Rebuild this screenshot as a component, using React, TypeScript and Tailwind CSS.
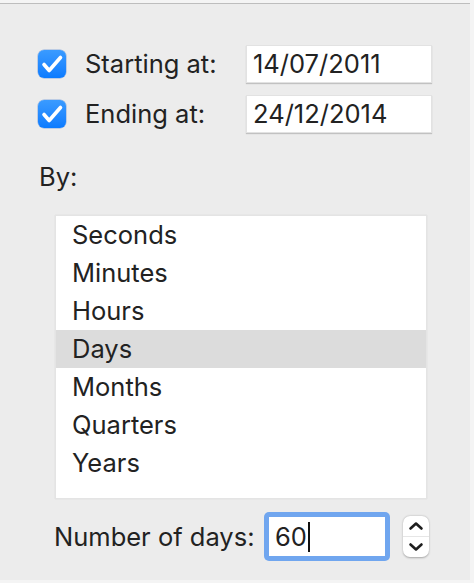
import React from "react"

const units = ["Seconds", "Minutes", "Hours", "Days", "Months", "Quarters", "Years"]

function CheckBox() {
    return (
        <div className="w-[28px] h-[28px] rounded-[6px] bg-gradient-to-b from-[#3a9bff] to-[#0a7bff] shadow-[0_0_0_0.5px_rgba(0,80,200,0.4)]">
            <svg width="28" height="28" viewBox="0 0 28 28" fill="none">
                <path d="M6 14.5 L11.2 20.5 L22.5 7.5" stroke="white" strokeWidth="3.6" strokeLinecap="round" strokeLinejoin="round" />
            </svg>
        </div>
    )
}

function DateRow({ label, value }: { label: string; value: string }) {
    return (
        <div className="flex items-center h-[38px]">
            <div className="w-[47px] flex">
                <CheckBox />
            </div>
            <span className="w-[161px]">{label}</span>
            <div className="w-[186px] h-[38px] bg-white border border-[#e2e2e2] shadow-[0_1px_1px_rgba(0,0,0,0.18)] flex items-center pl-[6px]">
                {value}
            </div>
        </div>
    )
}

export default function App() {
    const selected = "Days"

    return (
        <div
            className="w-[474px] h-[583px] bg-[#f4f4f4] text-[#222222] text-[25.5px] leading-none overflow-hidden"
            style={{ fontFamily: "Inter, 'Noto Sans', sans-serif" }}
        >
            <div className="h-[3px]" />
            <div className="h-[577px] mr-[4px] bg-[#ececec] border-t border-[#bdbdbd] flex flex-col">
                <div className="mt-[41px] ml-[38px] flex flex-col gap-[12px]">
                    <DateRow label="Starting at:" value="14/07/2011" />
                    <DateRow label="Ending at:" value="24/12/2014" />
                </div>

                <div className="mt-[30px] ml-[39px] h-[28px] flex items-center">By:</div>

                <div className="mt-[24px] ml-[55px] w-[372px] h-[284px] bg-white border border-[#e4e4e4] shadow-[0_0_1px_rgba(0,0,0,0.12)] flex flex-col">
                    {units.map(unit => (
                        <div
                            key={unit}
                            className={
                                unit === selected
                                    ? "h-[38px] shrink-0 flex items-center pl-[16px] bg-[#dcdcdc]"
                                    : "h-[38px] shrink-0 flex items-center pl-[16px]"
                            }
                        >
                            {unit}
                        </div>
                    ))}
                </div>

                <div className="mt-[13px] ml-[54px] flex items-center h-[49px]">
                    <span className="w-[210px]">Number of days:</span>
                    <div className="w-[126px] h-[49px] rounded-[5px] bg-[#70a6ef] p-[5px]">
                        <div className="w-full h-full bg-white flex items-center pl-[6px]">
                            <span>60</span>
                            <span className="w-[2px] h-[30px] bg-[#111111] ml-[1px]" />
                        </div>
                    </div>
                    <div className="ml-[13px] w-[26px] h-[41px] rounded-[7px] bg-white shadow-[0_0.5px_2px_rgba(0,0,0,0.3)] flex flex-col">
                        <div className="flex-1 flex items-center justify-center border-b border-[#e6e6e6]">
                            <svg width="16" height="10" viewBox="0 0 16 10" fill="none">
                                <path d="M2.5 7.5 L8 2.5 L13.5 7.5" stroke="#1e1e1e" strokeWidth="2.6" strokeLinecap="round" strokeLinejoin="round" />
                            </svg>
                        </div>
                        <div className="flex-1 flex items-center justify-center">
                            <svg width="16" height="10" viewBox="0 0 16 10" fill="none">
                                <path d="M2.5 2.5 L8 7.5 L13.5 2.5" stroke="#1e1e1e" strokeWidth="2.6" strokeLinecap="round" strokeLinejoin="round" />
                            </svg>
                        </div>
                    </div>
                </div>
            </div>
        </div>
    )
}
